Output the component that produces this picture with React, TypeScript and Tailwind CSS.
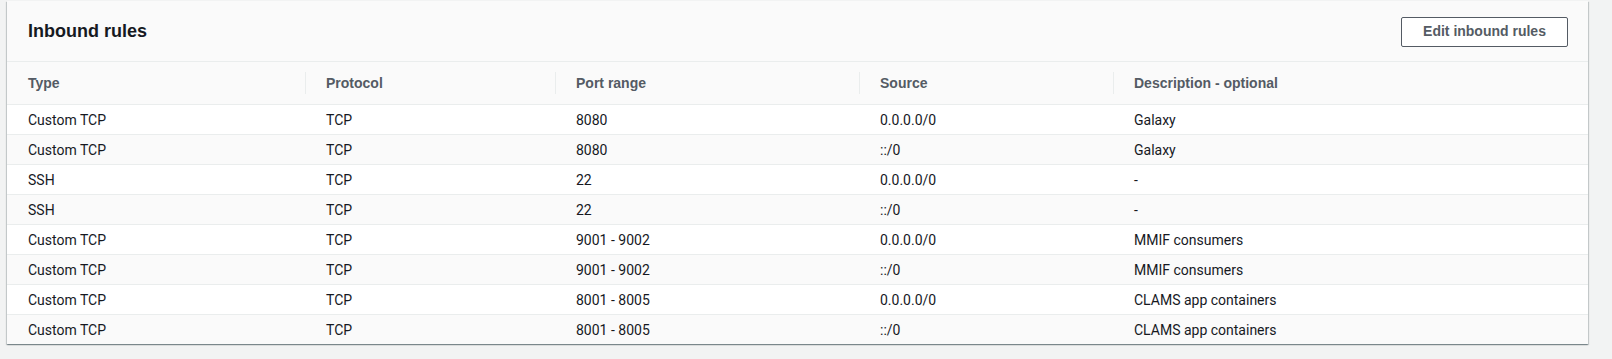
import React from "react";

const rows = [
  ["Custom TCP", "TCP", "8080", "0.0.0.0/0", "Galaxy"],
  ["Custom TCP", "TCP", "8080", "::/0", "Galaxy"],
  ["SSH", "TCP", "22", "0.0.0.0/0", "-"],
  ["SSH", "TCP", "22", "::/0", "-"],
  ["Custom TCP", "TCP", "9001 - 9002", "0.0.0.0/0", "MMIF consumers"],
  ["Custom TCP", "TCP", "9001 - 9002", "::/0", "MMIF consumers"],
  ["Custom TCP", "TCP", "8001 - 8005", "0.0.0.0/0", "CLAMS app containers"],
  ["Custom TCP", "TCP", "8001 - 8005", "::/0", "CLAMS app containers"],
];

const headers = ["Type", "Protocol", "Port range", "Source", "Description - optional"];

const bold = { fontFamily: "'Liberation Sans', Arial, sans-serif" };

export default function App() {
  return (
    <div
      className="w-[1612px] h-[359px] bg-[#f2f3f3] pt-[1px] pl-[7px] overflow-hidden"
      style={{ fontFamily: "Roboto, 'Liberation Sans', Arial, sans-serif" }}
    >
      <div className="w-[1581px] bg-white shadow-[0_1px_1px_0_rgba(0,28,36,0.3),1px_1px_1px_0_rgba(0,28,36,0.15),-1px_1px_1px_0_rgba(0,28,36,0.15)]">
        <div className="h-[61px] bg-[#fafafa] border-b border-[#eaeded] flex items-center justify-between pl-[21px] pr-[20px]">
          <h2 className="text-[18px] font-bold text-[#16191f] leading-[22px]" style={bold}>
            Inbound rules
          </h2>
          <button
            className="h-[30px] w-[167px] bg-white border border-[#545b64] rounded-[2px] text-[14px] font-bold text-[#545b64] mt-[1px]"
            style={bold}
          >
            Edit inbound rules
          </button>
        </div>
        <div className="grid grid-cols-[298px_250px_304px_254px_1fr] h-[42px] bg-[#fafafa] items-center">
          {headers.map((h, i) => (
            <div
              key={h}
              style={bold}
              className={
                i === 0
                  ? "pl-[21px] text-[14px] font-bold text-[#545b64]"
                  : "pl-[20px] text-[14px] font-bold text-[#545b64] border-l border-[#eaeded] h-[22px] flex items-center"
              }
            >
              {h}
            </div>
          ))}
        </div>
        {rows.map((r, ri) => (
          <div
            key={ri}
            className={
              ri % 2 === 0
                ? "grid grid-cols-[298px_250px_304px_254px_1fr] h-[30px] border-t border-[#eaeded] bg-white items-center"
                : "grid grid-cols-[298px_250px_304px_254px_1fr] h-[30px] border-t border-[#eaeded] bg-[#fafafa] items-center"
            }
          >
            {r.map((c, ci) => (
              <div key={ci} className="pl-[21px] pt-[1px] text-[14px] text-[#16191f]">
                {c}
              </div>
            ))}
          </div>
        ))}
      </div>
    </div>
  );
}
